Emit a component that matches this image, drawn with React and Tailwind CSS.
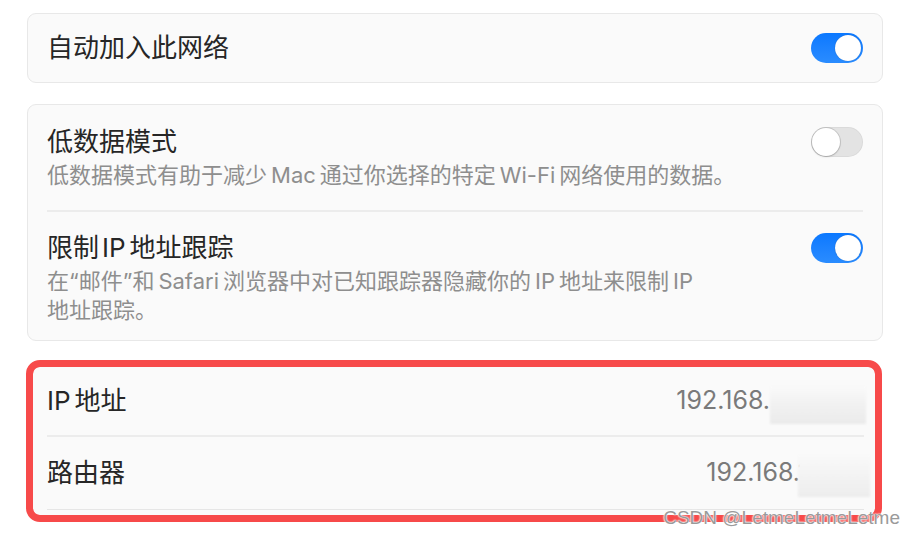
import React from "react";

const cjk = { fontFamily: '"Inter","Noto Sans CJK SC",sans-serif' };

function Toggle({ on, className = "" }) {
  return on ? (
    <div className={"relative w-[52px] h-[30px] rounded-full bg-gradient-to-b from-[#0a78ff] to-[#2a8cff] shrink-0 " + className}>
      <div className="absolute right-[2px] top-[2px] w-[26px] h-[26px] rounded-full bg-white shadow-[0_0_1px_rgba(0,0,0,0.3)]" />
    </div>
  ) : (
    <div className={"relative w-[52px] h-[30px] rounded-full bg-[#e3e3e3] shadow-[inset_0_0_0_1px_rgba(0,0,0,0.04)] shrink-0 " + className}>
      <div className="absolute left-[1px] top-[1px] w-[28px] h-[28px] rounded-full bg-white shadow-[0_0_0_1px_rgba(0,0,0,0.12),0_1px_2px_rgba(0,0,0,0.15)]" />
    </div>
  );
}

export default function App() {
  return (
    <div className="relative w-[908px] h-[536px] overflow-hidden bg-white text-[#262626]" style={cjk}>
      <div className="flex flex-col pt-[13px] pl-[27px] w-[883px]">
        {/* Card 1 */}
        <div className="h-[70px] rounded-[9px] border border-[#e8e8e8] bg-[#fafafa] flex items-center justify-between pl-[19px] pr-[19px]">
          <div className="text-[26px] leading-[34px]">自动加入此网络</div>
          <Toggle on />
        </div>

        {/* Card 2 */}
        <div className="mt-[21px] h-[237px] rounded-[9px] border border-[#e8e8e8] bg-[#fafafa] flex flex-col px-[19px]">
          <div className="flex items-start justify-between pt-[20px] pb-[20px]">
            <div className="flex flex-col">
              <div className="text-[26px] leading-[34px]">低数据模式</div>
              <div className="mt-[2px] text-[22px] leading-[29px] text-[#8e8e8e]">
                低数据模式有助于减少<span className="mx-[4px]">Mac</span>通过你选择的特定<span className="mx-[4px]">Wi-Fi</span>网络使用的数据。
              </div>
            </div>
            <Toggle on={false} className="mt-[2px]" />
          </div>
          <div className="h-[2px] bg-[#ececec]" />
          <div className="flex items-start justify-between pt-[19px]">
            <div className="flex flex-col">
              <div className="text-[26px] leading-[34px]">
                限制<span className="ml-[3px] mr-[4px]">IP</span>地址跟踪
              </div>
              <div className="mt-[2px] text-[22px] leading-[29px] text-[#8e8e8e]">
                在“邮件”和<span className="mx-[4px]">Safari</span>浏览器中对已知跟踪器隐藏你的<span className="mx-[4px]">IP</span>地址来限制<span className="ml-[4px]">IP</span>
                <br />
                地址跟踪。
              </div>
            </div>
            <Toggle on className="mt-[2px]" />
          </div>
        </div>

        {/* Red annotated card */}
        <div className="mt-[19px] -ml-[1px] w-[856px] h-[162px] rounded-[14px] border-[7px] border-[#f74a4a] bg-[#f74a4a] overflow-hidden">
          <div className="h-full rounded-[6px] bg-[#fafafa] flex flex-col pl-[14px]">
            <div className="h-[68px] flex items-center justify-between">
              <div className="text-[26px] leading-[34px]">
                IP<span className="ml-[4px]">地址</span>
              </div>
              <div className="flex items-center mr-[9px]">
                <span className="text-[25px] text-[#7a7a7a]">192.168.</span>
                <div className="w-[96px] h-[38px] mt-[8px] bg-gradient-to-b from-[#fafafa] via-[#f1f1f1] to-[#ebebeb] blur-[1px]" />
              </div>
            </div>
            <div className="h-[2px] bg-[#ececec] mr-[11px]" />
            <div className="h-[72px] flex items-center justify-between">
              <div className="text-[26px] leading-[34px]">路由器</div>
              <div className="flex items-center mr-[5px]">
                <span className="text-[25px] text-[#7a7a7a]">192.168.1</span>
                <div className="-ml-[10px] w-[72px] h-[42px] mt-[6px] bg-gradient-to-b from-[#f9f9f9] via-[#f3f3f3] to-[#ededed] blur-[1px]" />
              </div>
            </div>
            <div className="h-[1px] bg-[#e6e6e6] mr-[11px]" />
          </div>
        </div>
      </div>

      {/* watermark */}
      <div
        className="absolute right-[8px] bottom-[7px] text-[19px] leading-[22px] text-[#9a9a9a]"
        style={{ fontFamily: '"Liberation Sans",Arial,sans-serif', textShadow: "0 0 2px #fff, 0 0 2px #fff, 0 0 1px #fff" }}
      >
        CSDN @LetmeLetmeLetme
      </div>
    </div>
  );
}
